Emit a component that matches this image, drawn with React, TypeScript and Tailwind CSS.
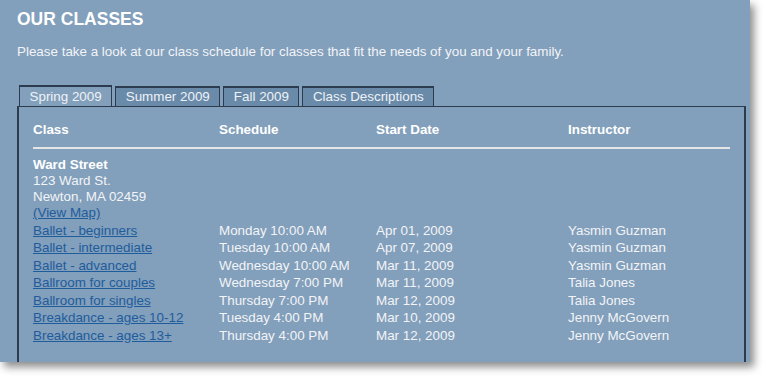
import React from 'react';

interface ClassRow {
  name: string;
  schedule: string;
  start: string;
  instructor: string;
}

const TABS = ['Spring 2009', 'Summer 2009', 'Fall 2009', 'Class Descriptions'];

const ROWS: ClassRow[] = [
  { name: 'Ballet - beginners', schedule: 'Monday 10:00 AM', start: 'Apr 01, 2009', instructor: 'Yasmin Guzman' },
  { name: 'Ballet - intermediate', schedule: 'Tuesday 10:00 AM', start: 'Apr 07, 2009', instructor: 'Yasmin Guzman' },
  { name: 'Ballet - advanced', schedule: 'Wednesday 10:00 AM', start: 'Mar 11, 2009', instructor: 'Yasmin Guzman' },
  { name: 'Ballroom for couples', schedule: 'Wednesday 7:00 PM', start: 'Mar 11, 2009', instructor: 'Talia Jones' },
  { name: 'Ballroom for singles', schedule: 'Thursday 7:00 PM', start: 'Mar 12, 2009', instructor: 'Talia Jones' },
  { name: 'Breakdance - ages 10-12', schedule: 'Tuesday 4:00 PM', start: 'Mar 10, 2009', instructor: 'Jenny McGovern' },
  { name: 'Breakdance - ages 13+', schedule: 'Thursday 4:00 PM', start: 'Mar 12, 2009', instructor: 'Jenny McGovern' },
];

const cols = 'grid grid-cols-[186px_157px_192px_1fr]';

export default function App() {
  return (
    <div className="w-[766px] h-[378px] bg-white overflow-hidden font-['Liberation_Sans',Arial,sans-serif] text-[13.4px]">
      <div className="w-[750px] h-[362px] bg-[#829fbb] shadow-[4px_5px_8px_rgba(0,0,0,0.45)] flex flex-col">
        {/* Heading */}
        <h1 className="px-[17px] pt-[9px] text-[17.5px] font-bold text-white leading-[20px]">OUR CLASSES</h1>
        <p className="px-[17px] mt-[15px] text-[#f2f4f7] leading-[16px]">
          Please take a look at our class schedule for classes that fit the needs of you and your family.
        </p>

        {/* Tabs */}
        <div className="flex gap-[3px] ml-[19px] mt-[25px] relative z-10">
          {TABS.map((t, i) => (
            <div
              key={t}
              className={`h-[20px] px-[9.5px] leading-[18px] border border-b-0 border-[#2c3c4e] text-[#eef2f6] ${
                i === 0 ? 'bg-[#829fbb] h-[21px] pt-[1px] border-t-2' : 'bg-[#6a8aaa] mt-[1px] border-t-2'
              }`}
            >
              {t}
            </div>
          ))}
        </div>

        {/* Tab body */}
        <div className="ml-[17px] w-[729px] flex-1 border-l-2 border-r-2 border-t border-[#2c3c4e] pl-[14px] pr-[14px] text-[#f2f4f7]">
          <div className={`${cols} font-bold text-white pt-[15px] pb-[9px] leading-[16px] border-b-2 border-[#e4e6e6]`}>
            <div>Class</div>
            <div>Schedule</div>
            <div>Start Date</div>
            <div>Instructor</div>
          </div>

          <div className="pt-[8px] leading-[16px]">
            <div className="font-bold text-white">Ward Street</div>
            <div>123 Ward St.</div>
            <div>Newton, MA 02459</div>
            <a href="#" className="text-[#1f5c9c] underline">(View Map)</a>
          </div>

          <div className="mt-[0.5px]">
            {ROWS.map(r => (
              <div key={r.name} className={`${cols} h-[17.5px] leading-[17px]`}>
                <a href="#" className="text-[#1f5c9c] underline">{r.name}</a>
                <div>{r.schedule}</div>
                <div>{r.start}</div>
                <div>{r.instructor}</div>
              </div>
            ))}
          </div>
        </div>
      </div>
    </div>
  );
}
